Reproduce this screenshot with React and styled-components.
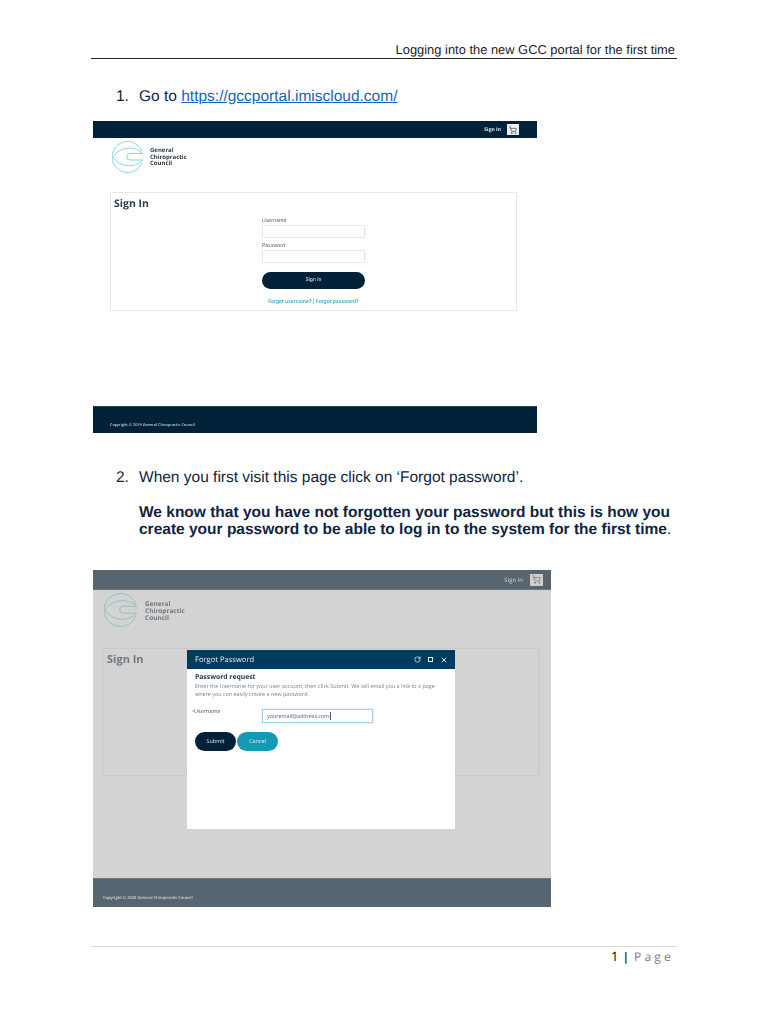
import styled, { createGlobalStyle } from 'styled-components';
import { ShoppingCart, RotateCw, X } from 'lucide-react';

const GlobalStyle = createGlobalStyle`
  html, body {
    margin: 0;
    padding: 0;
    background: #ffffff;
    font-family: "Liberation Sans", Arial, sans-serif;
    text-rendering: geometricPrecision;
  }
`;

const Logo = ({ size, color }) => (
  <svg width={size} height={size} viewBox="0 0 32 32" fill="none" stroke={color} strokeWidth="0.7">
    <path d="M30 10.5 A15.5 15.5 0 1 0 30 21.5" />
    <path d="M30.5 12.5 C23 4 7 6 1 16 C7 26 23 28 30.5 19" />
    <path d="M31 12.5 H18 A3.2 3.2 0 0 0 18 19 H31" />
  </svg>
);

const Brand = ({ size, color, muted }) => (
  <BrandBox $muted={muted}>
    <Logo size={size} color={color} />
    <BrandName $muted={muted}>General<br />Chiropractic<br />Council</BrandName>
  </BrandBox>
);

export default function App() {
  return (
    <Page>
      <GlobalStyle />
      <Sheet>
        <RunningHead>Logging into the new GCC portal for the first time</RunningHead>

        <Step>
          <StepNumber>1.</StepNumber>
          <span>Go to <DocLink href="#">https://gccportal.imiscloud.com/</DocLink></span>
        </Step>

        <FirstShot>
          <TopBar>
            <SignLink>Sign In</SignLink>
            <CartBox><ShoppingCart size={8} strokeWidth={2} color="#33424f" /></CartBox>
          </TopBar>
          <Brand size={32} color="#4fc6d8" />
          <SignInPanel>
            <PanelTitle>Sign In</PanelTitle>
            <SignInForm>
              <FieldLabel>Username</FieldLabel>
              <FieldInput />
              <FieldLabel>Password</FieldLabel>
              <FieldInput />
              <SignInButton>Sign In</SignInButton>
              <ForgotLinks>Forgot username? | Forgot password?</ForgotLinks>
            </SignInForm>
          </SignInPanel>
          <Spacer />
          <BottomBar>
            <Copyright>Copyright © 2019 General Chiropractic Council</Copyright>
          </BottomBar>
        </FirstShot>

        <StepTwo>
          <StepNumber>2.</StepNumber>
          <span>When you first visit this page click on ‘Forgot password’.</span>
        </StepTwo>

        <Emphasis>
          <strong>We know that you have not forgotten your password but this is how you create your password to be able to log in to the system for the first time</strong>.
        </Emphasis>

        <SecondShot>
          <DimBar>
            <DimSignLink>Sign In</DimSignLink>
            <DimCartBox><ShoppingCart size={9} strokeWidth={2} color="#6b7378" /></DimCartBox>
          </DimBar>
          <Brand size={34} color="#7fb6bd" muted />
          <DimPanel>
            <DimTitle>Sign In</DimTitle>
          </DimPanel>
          <Spacer />
          <DimFooter>
            <DimCopyright>Copyright © 2020 General Chiropractic Council</DimCopyright>
          </DimFooter>

          <Modal>
            <ModalBar>
              <ModalTitle>Forgot Password</ModalTitle>
              <ModalTools>
                <RotateCw size={7} strokeWidth={2.6} />
                <WindowIcon />
                <X size={8} strokeWidth={2.8} />
              </ModalTools>
            </ModalBar>
            <ModalBody>
              <RequestTitle>Password request</RequestTitle>
              <RequestText>
                Enter the Username for your user account, then click Submit. We will email you a link to a page
                where you can easily create a new password.
              </RequestText>
              <RequestRow>
                <RequestLabel><Required>•</Required>Username</RequestLabel>
                <EmailField><Caret>youremail@address.com</Caret></EmailField>
              </RequestRow>
              <ButtonRow>
                <PillButton>Submit</PillButton>
                <PillButton $teal>Cancel</PillButton>
              </ButtonRow>
            </ModalBody>
          </Modal>
        </SecondShot>

        <PageFooter>
          <PageNumber>1</PageNumber>
          <PageBar>|</PageBar>
          <PageWord>Page</PageWord>
        </PageFooter>
      </Sheet>
    </Page>
  );
}

const Page = styled.div`
  width: 768px;
  height: 1024px;
  overflow: hidden;
  background: #ffffff;
`;

const Sheet = styled.div`
  display: flex;
  flex-direction: column;
  width: 586px;
  margin-left: 91px;
  color: #10243f;
`;

const RunningHead = styled.div`
  box-sizing: border-box;
  height: 59px;
  padding: 41px 2px 0 0;
  border-bottom: 1px solid #222222;
  text-align: right;
  font-size: 12.9px;
  line-height: 17px;
  color: #222222;
`;

const Step = styled.div`
  display: flex;
  margin-top: 29px;
  padding-left: 25px;
  font-size: 15.5px;
  line-height: 18px;
`;

const StepTwo = styled(Step)`
  margin-top: 36px;
`;

const StepNumber = styled.span`
  width: 23px;
`;

const DocLink = styled.a`
  color: #0f66c0;
  text-decoration: underline;
`;

const Emphasis = styled.div`
  width: 536px;
  margin: 17px 0 0 48px;
  font-size: 15.5px;
  line-height: 17px;
`;

const FirstShot = styled.div`
  display: flex;
  flex-direction: column;
  width: 444px;
  height: 312px;
  margin: 15px 0 0 2px;
  background: #ffffff;
  filter: blur(0.3px);
`;

const TopBar = styled.div`
  display: flex;
  align-items: center;
  justify-content: flex-end;
  gap: 6px;
  height: 17px;
  padding-right: 18px;
  background: #012138;
`;

const SignLink = styled.span`
  font: 700 5px "Open Sans", sans-serif;
  color: #e8edf0;
`;

const CartBox = styled.span`
  display: flex;
  align-items: center;
  justify-content: center;
  width: 12px;
  height: 11px;
  background: #efefef;
`;

const BrandBox = styled.div`
  display: flex;
  align-items: center;
  gap: ${(p) => (p.$muted ? '7px' : '6px')};
  height: ${(p) => (p.$muted ? '34px' : '32px')};
  margin: ${(p) => (p.$muted ? '3px 0 0 11px' : '3px 0 0 19px')};
`;

const BrandName = styled.div`
  font: 700 ${(p) => (p.$muted ? '6.5px/7px' : '6px/6.8px')} "Open Sans", sans-serif;
  color: ${(p) => (p.$muted ? '#6f7a80' : '#2b3b4c')};
`;

const SignInPanel = styled.div`
  box-sizing: border-box;
  width: 407px;
  height: 119px;
  margin: 19px 0 0 17px;
  border: 1px solid #e9e9e9;
`;

const PanelTitle = styled.div`
  margin: 4px 0 0 3px;
  font: 700 10.5px/14px "Open Sans", sans-serif;
  color: #2d3c4c;
`;

const SignInForm = styled.div`
  display: flex;
  flex-direction: column;
  width: 103px;
  margin: 6px 0 0 151px;
`;

const FieldLabel = styled.div`
  font: 400 5px/8px "Inter", sans-serif;
  color: #4b5661;
`;

const FieldInput = styled.div`
  box-sizing: border-box;
  height: 13px;
  margin-bottom: 4px;
  border: 1px solid #e6e6e6;
  border-radius: 1px;
`;

const SignInButton = styled.div`
  height: 17px;
  margin-top: 5px;
  border-radius: 9px;
  background: #012138;
  color: #e8edf0;
  text-align: center;
  font: 400 5px/17px "Inter", sans-serif;
`;

const ForgotLinks = styled.div`
  margin-top: 9px;
  text-align: center;
  white-space: nowrap;
  font: 500 5px/8px "Inter", sans-serif;
  color: #1f9fb8;
`;

const Spacer = styled.div`
  flex: 1;
`;

const BottomBar = styled.div`
  box-sizing: border-box;
  display: flex;
  align-items: flex-end;
  height: 27px;
  padding: 0 0 5px 17px;
  background: #012138;
  border-top: 1px solid #24404f;
`;

const Copyright = styled.span`
  font: 600 3.8px/5px "Open Sans", sans-serif;
  color: #c5ced4;
`;

const SecondShot = styled.div`
  position: relative;
  display: flex;
  flex-direction: column;
  width: 458px;
  height: 337px;
  margin: 32px 0 0 2px;
  background: #d3d3d3;
  filter: blur(0.3px);
`;

const DimBar = styled.div`
  box-sizing: border-box;
  display: flex;
  align-items: center;
  justify-content: flex-end;
  gap: 7px;
  height: 20px;
  padding-right: 8px;
  background: #56656f;
  border-bottom: 1px solid #6b7880;
`;

const DimSignLink = styled.span`
  font: 400 6px "Open Sans", sans-serif;
  color: #d3d8db;
`;

const DimCartBox = styled.span`
  display: flex;
  align-items: center;
  justify-content: center;
  width: 13px;
  height: 12px;
  background: #cfcfcf;
`;

const DimPanel = styled.div`
  box-sizing: border-box;
  width: 438px;
  height: 128px;
  margin: 21px 0 0 9px;
  border: 1px solid #c9c9c9;
`;

const DimTitle = styled.div`
  margin: 3px 0 0 4px;
  font: 700 11px/15px "Open Sans", sans-serif;
  color: #6e7880;
`;

const DimFooter = styled.div`
  box-sizing: border-box;
  display: flex;
  align-items: flex-end;
  height: 29px;
  padding: 0 0 6px 10px;
  background: #56656f;
  border-top: 1px solid #6b7880;
`;

const DimCopyright = styled.span`
  font: 600 4px/5px "Open Sans", sans-serif;
  color: #d0d5d8;
`;

const Modal = styled.div`
  position: absolute;
  top: 80px;
  left: 94px;
  width: 268px;
  height: 179px;
  background: #ffffff;
`;

const ModalBar = styled.div`
  display: flex;
  align-items: center;
  justify-content: space-between;
  height: 19px;
  padding: 0 7px 0 8px;
  background: #003a5e;
  color: #e6edf1;
`;

const ModalTitle = styled.span`
  font: 400 7.6px "Open Sans", sans-serif;
`;

const ModalTools = styled.div`
  display: flex;
  align-items: center;
  gap: 6px;
`;

const WindowIcon = styled.span`
  box-sizing: border-box;
  width: 5px;
  height: 5px;
  border: 0.7px solid #e6edf1;
  border-top-width: 1.5px;
  margin: 0 1px;
`;

const ModalBody = styled.div`
  display: flex;
  flex-direction: column;
  padding: 3px 8px 0;
`;

const RequestTitle = styled.div`
  font: 700 6.8px/9px "Open Sans", sans-serif;
  color: #1d3350;
`;

const RequestText = styled.div`
  margin-top: 1px;
  font: 400 5.46px/8px "Open Sans", sans-serif;
  color: #7d8489;
`;

const RequestRow = styled.div`
  display: flex;
  align-items: flex-start;
  margin-top: 11px;
`;

const RequestLabel = styled.div`
  width: 67px;
  font: 400 5.5px/5px "Open Sans", sans-serif;
  color: #4a5560;
`;

const Required = styled.span`
  margin-left: -3px;
  color: #d8433b;
`;

const EmailField = styled.div`
  box-sizing: border-box;
  width: 111px;
  height: 14px;
  padding: 0 4px;
  border: 1px solid #a9cfe8;
  box-shadow: 0 0 2px #b8dcf2;
  font: 400 5.4px/12px "Open Sans", sans-serif;
  color: #5a646e;
`;

const Caret = styled.span`
  padding-right: 1px;
  border-right: 1px solid #4a5560;
`;

const ButtonRow = styled.div`
  display: flex;
  gap: 1px;
  margin-top: 9px;
`;

const PillButton = styled.div`
  width: 41px;
  height: 19px;
  border-radius: 10px;
  background: ${(p) => (p.$teal ? '#139ab4' : '#012138')};
  color: #e8eef1;
  text-align: center;
  font: 400 5.4px/18px "Open Sans", sans-serif;
`;

const PageFooter = styled.div`
  display: flex;
  align-items: baseline;
  justify-content: flex-end;
  height: 20px;
  margin-top: 39px;
  padding-right: 6px;
  border-top: 1px solid #d9d9d9;
  font: 400 12px/18px "Open Sans", sans-serif;
`;

const PageNumber = styled.span`
  font-size: 13px;
  color: #000000;
`;

const PageBar = styled.span`
  margin: 0 5px 0 4px;
  font-weight: 700;
  color: #333333;
`;

const PageWord = styled.span`
  letter-spacing: 3.2px;
  margin-right: -3px;
  color: #7f7f7f;
`;
